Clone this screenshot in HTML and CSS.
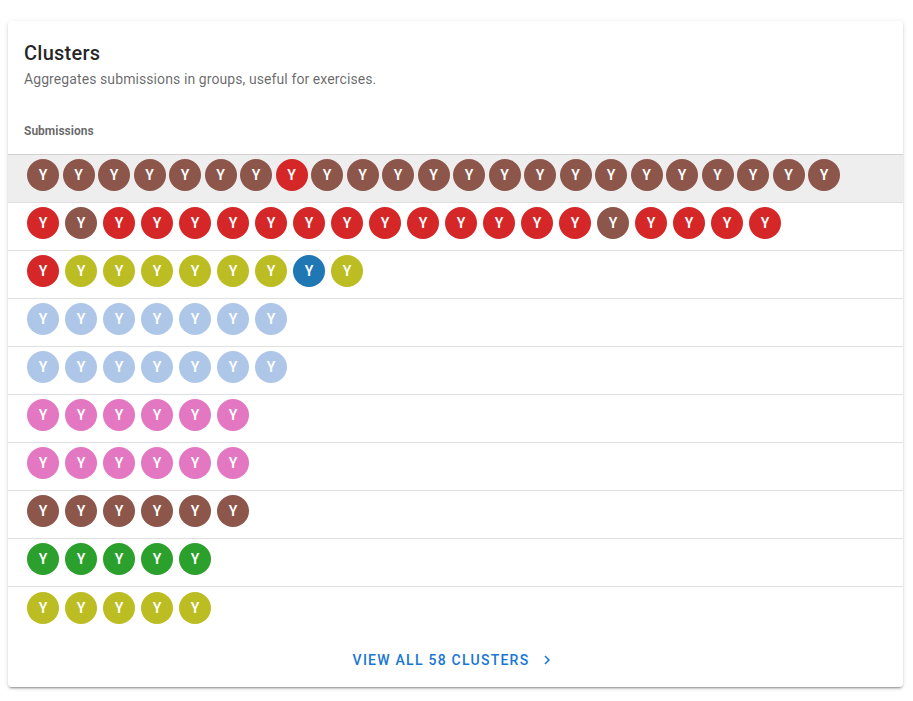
FILE: index.html
```html
<!DOCTYPE html>
<html>
  <head>
    <meta charset="utf-8">
    <link rel="stylesheet" href="styles.css">
    <title>Clusters</title>
  </head>
  <body>
    <div class="prev-card"></div>
    <section class="card">
      <h2 class="card-title">Clusters</h2>
      <p class="card-subtitle">Aggregates submissions in groups, useful for exercises.</p>
      <div class="table-head">Submissions</div>
      <div class="row row-tight active">
        <span class="dot brown">Y</span><span class="dot brown">Y</span><span class="dot brown">Y</span><span class="dot brown">Y</span><span class="dot brown">Y</span><span class="dot brown">Y</span><span class="dot brown">Y</span><span class="dot red">Y</span><span class="dot brown">Y</span><span class="dot brown">Y</span><span class="dot brown">Y</span><span class="dot brown">Y</span><span class="dot brown">Y</span><span class="dot brown">Y</span><span class="dot brown">Y</span><span class="dot brown">Y</span><span class="dot brown">Y</span><span class="dot brown">Y</span><span class="dot brown">Y</span><span class="dot brown">Y</span><span class="dot brown">Y</span><span class="dot brown">Y</span><span class="dot brown">Y</span>
      </div>
      <div class="row">
        <span class="dot red">Y</span><span class="dot brown">Y</span><span class="dot red">Y</span><span class="dot red">Y</span><span class="dot red">Y</span><span class="dot red">Y</span><span class="dot red">Y</span><span class="dot red">Y</span><span class="dot red">Y</span><span class="dot red">Y</span><span class="dot red">Y</span><span class="dot red">Y</span><span class="dot red">Y</span><span class="dot red">Y</span><span class="dot red">Y</span><span class="dot brown">Y</span><span class="dot red">Y</span><span class="dot red">Y</span><span class="dot red">Y</span><span class="dot red">Y</span>
      </div>
      <div class="row">
        <span class="dot red">Y</span><span class="dot olive">Y</span><span class="dot olive">Y</span><span class="dot olive">Y</span><span class="dot olive">Y</span><span class="dot olive">Y</span><span class="dot olive">Y</span><span class="dot blue">Y</span><span class="dot olive">Y</span>
      </div>
      <div class="row">
        <span class="dot light">Y</span><span class="dot light">Y</span><span class="dot light">Y</span><span class="dot light">Y</span><span class="dot light">Y</span><span class="dot light">Y</span><span class="dot light">Y</span>
      </div>
      <div class="row">
        <span class="dot light">Y</span><span class="dot light">Y</span><span class="dot light">Y</span><span class="dot light">Y</span><span class="dot light">Y</span><span class="dot light">Y</span><span class="dot light">Y</span>
      </div>
      <div class="row">
        <span class="dot pink">Y</span><span class="dot pink">Y</span><span class="dot pink">Y</span><span class="dot pink">Y</span><span class="dot pink">Y</span><span class="dot pink">Y</span>
      </div>
      <div class="row">
        <span class="dot pink">Y</span><span class="dot pink">Y</span><span class="dot pink">Y</span><span class="dot pink">Y</span><span class="dot pink">Y</span><span class="dot pink">Y</span>
      </div>
      <div class="row">
        <span class="dot brown">Y</span><span class="dot brown">Y</span><span class="dot brown">Y</span><span class="dot brown">Y</span><span class="dot brown">Y</span><span class="dot brown">Y</span>
      </div>
      <div class="row">
        <span class="dot green">Y</span><span class="dot green">Y</span><span class="dot green">Y</span><span class="dot green">Y</span><span class="dot green">Y</span>
      </div>
      <div class="row row-last">
        <span class="dot olive">Y</span><span class="dot olive">Y</span><span class="dot olive">Y</span><span class="dot olive">Y</span><span class="dot olive">Y</span>
      </div>
      <div class="card-actions">
        <a class="view-all" href="#">View all 58 clusters
          <svg class="chevron" width="24" height="24" viewBox="0 0 24 24"><path d="M8.59 16.58 13.17 12 8.59 7.41 10 6l6 6-6 6z" fill="currentColor"/></svg>
        </a>
      </div>
    </section>
  </body>
</html>
```

FILE: styles.css
```css
body {
  margin: 0;
  padding: 0 10px 14px 8px;
  background: #fff;
  font-family: Roboto, "Liberation Sans", sans-serif;
}
.prev-card {
  height: 0;
  margin-bottom: 21px;
  box-shadow: 0 3px 1px -2px rgba(0, 0, 0, .2), 0 2px 2px 0 rgba(0, 0, 0, .14), 0 1px 5px 0 rgba(0, 0, 0, .12);
}
.card {
  height: 666px;
  box-sizing: border-box;
  padding-top: 16px;
  border-radius: 4px;
  background: #fff;
  box-shadow: 0 3px 1px -2px rgba(0, 0, 0, .2), 0 2px 2px 0 rgba(0, 0, 0, .14), 0 1px 5px 0 rgba(0, 0, 0, .12);
}
.card-title {
  margin: 0;
  padding: 0 16px;
  font-size: 20px;
  font-weight: 500;
  line-height: 32px;
  letter-spacing: .0125em;
  color: rgba(0, 0, 0, .87);
}
.card-subtitle {
  margin: 0;
  padding: 0 16px;
  font-size: 14px;
  line-height: 20px;
  letter-spacing: .0064em;
  color: rgba(0, 0, 0, .6);
}
.table-head {
  height: 48px;
  box-sizing: border-box;
  margin-top: 17px;
  padding: 0 16px;
  font-size: 12px;
  font-weight: 700;
  line-height: 51px;
  color: rgba(0, 0, 0, .6);
}
.row {
  display: flex;
  align-items: flex-start;
  gap: 6px;
  height: 48px;
  box-sizing: border-box;
  padding: 4px 0 0 19px;
  border-top: 1px solid rgba(0, 0, 0, .12);
}
.row-tight {
  gap: 3.5px;
}
.row-last {
  padding-top: 5px;
}
.active {
  background: #eee;
}
.dot {
  flex: none;
  width: 32px;
  height: 32px;
  border-radius: 50%;
  font-size: 14px;
  font-weight: 600;
  line-height: 32px;
  text-align: center;
  color: #fff;
}
.brown { background: #8c564b; }
.red { background: #d62728; }
.olive { background: #bcbd22; }
.blue { background: #1f77b4; }
.light { background: #aec7e8; }
.pink { background: #e377c2; }
.green { background: #2ca02c; }
.card-actions {
  display: flex;
  justify-content: center;
  padding-top: 8px;
}
.view-all {
  display: flex;
  align-items: center;
  height: 36px;
  padding: 0 16px;
  font-size: 14px;
  font-weight: 500;
  letter-spacing: .0892857em;
  text-transform: uppercase;
  text-decoration: none;
  color: #1976d2;
}
.chevron {
  margin-left: 6px;
  margin-right: -1px;
  transform: scale(.75);
}
```
